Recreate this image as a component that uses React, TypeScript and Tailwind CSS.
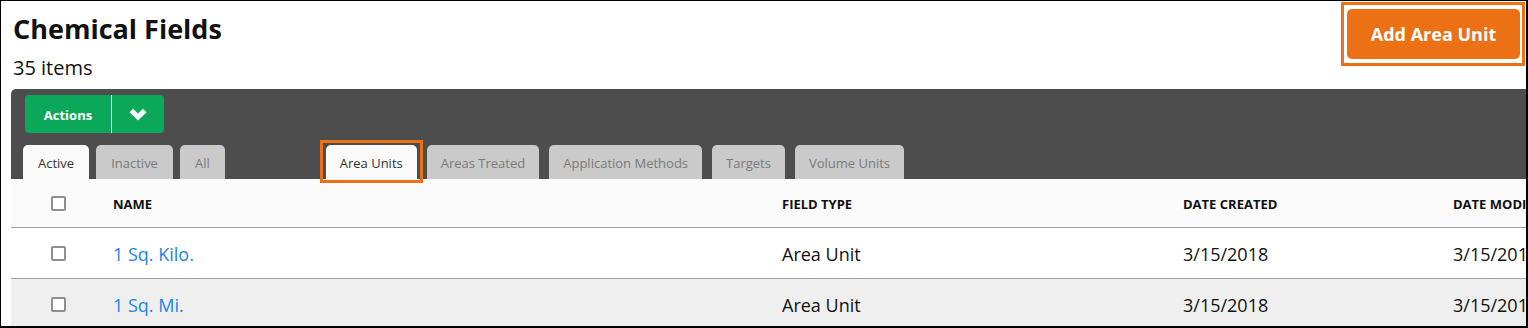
import { FC } from 'react';
import { clsx } from 'clsx';

const firstTabs = [
	{ label: 'Active', active: true },
	{ label: 'Inactive', active: false },
	{ label: 'All', active: false },
];

const fieldTabs = [
	{ label: 'Area Units', active: true },
	{ label: 'Areas Treated', active: false },
	{ label: 'Application Methods', active: false },
	{ label: 'Targets', active: false },
	{ label: 'Volume Units', active: false },
];

const rows = [
	{ name: '1 Sq. Kilo.', type: 'Area Unit', created: '3/15/2018', modified: '3/15/2018' },
	{ name: '1 Sq. Mi.', type: 'Area Unit', created: '3/15/2018', modified: '3/15/2018' },
];

const ChevronDown: FC = () => (
	<svg width="18" height="13" viewBox="0 0 18 13" fill="currentColor">
		<path d="M0.5 4.2 L4 0.8 L9 5.6 L14 0.8 L17.5 4.2 L9 12.4 Z" />
	</svg>
);

const Checkbox: FC = () => <span className="block size-[15px] rounded-[2px] border-2 border-[#8e8e96] bg-white" />;

// first group has slightly wider padding than the field tabs
const Tab: FC<{ label: string; active: boolean; wide?: boolean }> = ({ label, active, wide }) => (
	<div
		className={clsx(
			'flex h-[34px] items-center rounded-t-[5px] pt-[3px] text-[13px] whitespace-nowrap',
			wide ? 'px-[15px]' : 'px-[14px]',
			active ? 'bg-[#fafafa] text-[#333]' : 'bg-[#cacaca] text-[#7a7a7a]',
		)}
	>
		{label}
	</div>
);

export default function App() {
	return (
		<div
			className="h-[328px] w-[1528px] overflow-hidden border-t border-r-2 border-b-2 border-l border-black bg-white pl-[10px]"
			style={{ fontFamily: '"Open Sans", "Noto Sans", sans-serif' }}
		>
			<div className="flex items-start justify-between">
				<div className="pt-[12px] pl-[2px] text-[#111]">
					<h1 className="text-[27px] leading-[32px] font-bold">Chemical Fields</h1>
					<p className="mt-[9px] text-[20px] leading-[28px]">35 items</p>
				</div>
				<div className="mt-[1px] mr-[1px] border-[3px] border-[#ec7014] py-[4px] pr-[2px] pl-[3px]">
					<button
						type="button"
						className="h-[50px] w-[173px] rounded-[5px] bg-[#ec7014] text-[18px] font-bold text-white"
					>
						Add Area Unit
					</button>
				</div>
			</div>

			<div className="mt-[7px] rounded-tl-[5px] bg-[#4d4d4d] pt-[6px]">
				<div className="pl-[14px]">
					<div className="flex h-[38px] w-[139px] items-stretch rounded-[4px] bg-[#0aa858] text-white">
						<span className="flex w-[86px] items-center justify-center pt-[3px] text-[13px] font-bold">Actions</span>
						<span className="w-px bg-white" />
						<span className="flex flex-1 items-center justify-center">
							<ChevronDown />
						</span>
					</div>
				</div>
				<div className="mt-[12px] flex items-end pl-[12px]">
					<div className="flex gap-[7px]">
						{firstTabs.map((t) => (
							<Tab key={t.label} {...t} wide />
						))}
					</div>
					<div className="ml-[101px] flex gap-[10px]">
						{fieldTabs.map((t) => (
							<div key={t.label} className="relative">
								<Tab {...t} />
								{t.active && (
									<span className="pointer-events-none absolute -top-[5px] -right-[6px] -bottom-[4px] -left-[6px] z-10 border-[3px] border-[#ec7014]" />
								)}
							</div>
						))}
					</div>
				</div>
			</div>

			<div className="whitespace-nowrap">
				<div className="grid h-[49px] grid-cols-[102px_669px_401px_270px_1fr] items-center border-b border-[#a3a3a3] bg-[#fafafa] text-[13px] font-bold text-[#111] uppercase">
					<div className="pl-[40px]">
						<Checkbox />
					</div>
					<div className="pt-[3px]">Name</div>
					<div className="pt-[3px]">Field Type</div>
					<div className="pt-[3px]">Date Created</div>
					<div className="pt-[3px]">Date Modified</div>
				</div>
				{rows.map((r, i) => (
					<div
						key={r.name}
						className={clsx(
							'grid h-[51px] grid-cols-[102px_669px_401px_270px_1fr] items-center border-b border-[#a3a3a3] text-[18px] text-[#111]',
							i % 2 === 1 ? 'bg-[#efefef]' : 'bg-white',
						)}
					>
						<div className="pl-[40px]">
							<Checkbox />
						</div>
						<a href="#" className="justify-self-start pt-[2px] text-[#1a86e6]">
							{r.name}
						</a>
						<div className="pt-[2px]">{r.type}</div>
						<div className="pt-[2px]">{r.created}</div>
						<div className="pt-[2px]">{r.modified}</div>
					</div>
				))}
			</div>
		</div>
	);
}
